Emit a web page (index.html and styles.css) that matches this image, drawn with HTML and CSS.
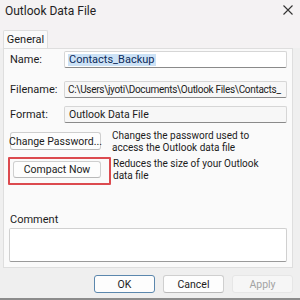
FILE: index.html
```html
<!DOCTYPE html>
<html>
<head>
<meta charset="utf-8">
<link rel="stylesheet" href="styles.css">
</head>
<body>
<div class="window">
  <div class="titlebar">
    <span class="title">Outlook Data File</span>
    <svg class="close" width="10" height="10" viewBox="0 0 10 10"><path d="M0.5 0.5 L9.5 9.5 M9.5 0.5 L0.5 9.5" stroke="#333" stroke-width="1.1" fill="none"/></svg>
  </div>
  <div class="tabs"><div class="tab">General</div></div>
  <div class="panel">
    <div class="field-row row-name">
      <span class="label">Name:</span>
      <div class="input"><span class="sel">Contacts_Backup</span></div>
    </div>
    <div class="field-row row-file">
      <span class="label">Filename:</span>
      <div class="input ro path">C:\Users\jyoti\Documents\Outlook Files\Contacts_</div>
    </div>
    <div class="field-row row-format">
      <span class="label">Format:</span>
      <div class="input ro">Outlook Data File</div>
    </div>
    <div class="action row-pass">
      <div class="cell"><button class="btn btn-pass">Change Password...</button></div>
      <div class="desc"><div>Changes the password used to</div><div>access the Outlook data file</div></div>
    </div>
    <div class="action row-compact">
      <div class="highlight"><button class="btn btn-compact">Compact Now</button></div>
      <div class="desc"><div>Reduces the size of your Outlook</div><div>data file</div></div>
    </div>
    <div class="comment-label">Comment</div>
    <div class="comment"></div>
  </div>
  <div class="footer">
    <button class="btn fbtn ok">OK</button>
    <button class="btn fbtn">Cancel</button>
    <button class="btn fbtn disabled">Apply</button>
  </div>
</div>
</body>
</html>
```
FILE: styles.css
```css
* { box-sizing: border-box; }
html, body { margin: 0; padding: 0; }
body {
  width: 300px; height: 300px; overflow: hidden;
  font-family: "Roboto", "Open Sans", sans-serif;
  font-size: 10.5px;
  color: #1c1c1c;
}
.window {
  width: 300px; height: 300px;
  background: #efefef;
  border-bottom: 2px solid #8c8c8c;
  display: flex; flex-direction: column;
}
.titlebar {
  height: 22px; flex: none;
  background: #f4f2f3;
  display: flex; align-items: center; justify-content: space-between;
  padding: 0 7px 0 5px;
}
.title { font-size: 12px; color: #222; }
.close { margin-top: -2px; }
.tabs { padding: 8px 0 0 3px; display: flex; background: #f4f2f3; flex: none; }
.tab {
  width: 45px; height: 18px;
  background: #fafafa;
  border: 1px solid #dedede; border-bottom: none;
  border-radius: 2px 2px 0 0;
  display: flex; align-items: center; justify-content: center;
  font-size: 11px;
}
.panel {
  margin: 0 7px 0 3px;
  height: 220px; flex: none;
  background: #fafafa;
  border: 1px solid #dedede;
  display: flex; flex-direction: column;
  padding: 2px 5px 0 5px;
}
.field-row { display: flex; align-items: center; height: 17px; flex: none; }
.row-file { margin-top: 13px; }
.row-format { margin-top: 8px; }
.label { width: 55px; padding-left: 1px; font-size: 11px; }
.input {
  flex: 1; height: 17px;
  background: #ffffff;
  border: 1px solid #d6d6d6; border-bottom-color: #8a8a8a;
  border-radius: 2px;
  display: flex; align-items: center;
  padding-left: 3px;
  white-space: nowrap; overflow: hidden;
  font-size: 10.5px;
}
.input.ro { background: #f7f7f7; padding-left: 4px; }
.input.path { font-size: 10px; letter-spacing: -0.3px; padding-left: 3px; }
.sel { background: #cce2f6; color: #0d2a5a; padding: 0 1px; line-height: 12px; font-size: 11px; }
.action { display: flex; align-items: flex-start; flex: none; }
.row-pass { margin-top: 9px; padding-left: 1px; }
.cell { width: 102px; flex: none; }
.desc { margin: -2px 0 0 0; line-height: 11.5px; font-size: 10px; white-space: nowrap; }
.row-compact { margin-top: 4px; }
.row-compact .desc { margin-left: 2px; margin-top: 1px; }
.highlight {
  flex: none;
  margin-left: -1px;
  width: 103px;
  border: 2px solid #dc4a4f;
  padding: 2px 8px 5px 3px;
  border-radius: 1px;
}
.btn {
  font-family: inherit; font-size: 10.5px; color: #1c1c1c;
  background: #fdfdfd;
  border: 1px solid #cfcfcf; border-bottom-color: #b9b9b9;
  border-radius: 3px;
  padding: 0; margin: 0;
  display: flex; align-items: center; justify-content: center;
  white-space: nowrap;
}
.btn-pass { width: 91px; height: 18px; }
.btn-compact { width: 88px; height: 17px; }
.comment-label { margin-top: 29px; line-height: 12px; padding-left: 1px; flex: none; font-size: 11px; }
.comment {
  margin-top: 2px;
  height: 34px; flex: none;
  background: #ffffff;
  border: 1px solid #d0d0d0; border-bottom-color: #9a9a9a;
  border-radius: 2px;
}
.footer {
  display: flex; justify-content: flex-end; gap: 8px;
  padding: 7px 7px 0 0;
}
.fbtn { width: 61px; height: 18px; }
.ok { border: 1px solid #5b87ad; }
.disabled { color: #a3a3a3; background: #f6f6f6; border-color: #e6e6e6; }
```
